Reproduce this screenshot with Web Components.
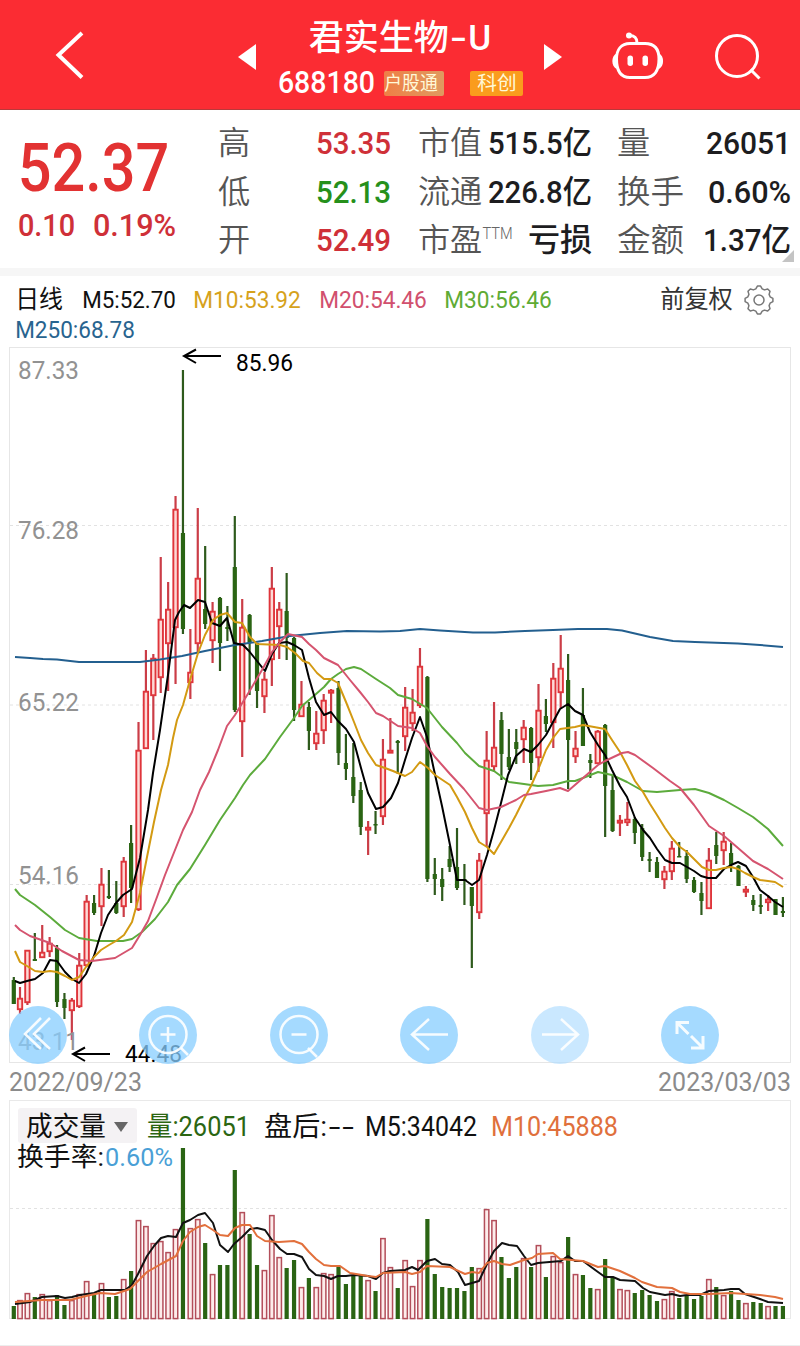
<!DOCTYPE html>
<html lang="zh-CN">
<head>
<meta charset="utf-8">
<title>君实生物-U 688180</title>
<style>
  body {
    margin: 0;
    width: 800px;
    height: 1346px;
    overflow: hidden;
    background: #fff;
    font-family: Roboto, "Noto Sans CJK SC", sans-serif;
  }
</style>
</head>
<body>
<stock-page></stock-page>

<script>
// Text squeezed to a fixed width, the figures use a condensed look
class FitText extends HTMLElement {
  constructor() {
    super();
    this.attachShadow({ mode: 'open' });
    this.shadowRoot.innerHTML = `
      <style>
        :host { display: block; flex: none; height: 1em; line-height: 1em; white-space: nowrap; }
        span { display: inline-block; transform-origin: 0 50%; vertical-align: top; height: 1em; }
      </style>
      <span><slot></slot></span>`;
  }

  connectedCallback() {
    const w = Number(this.getAttribute('w'));
    const size = Number(this.getAttribute('size'));
    const span = this.shadowRoot.querySelector('span');
    this.style.fontSize = `${size}px`;
    this.style.width = `${w}px`;
    const bearing = size * 0.035;
    const scale = (w + bearing * 2) / span.getBoundingClientRect().width;
    span.style.transform = `translateX(${-bearing}px) scaleX(${scale})`;
  }
}
customElements.define('fit-text', FitText);

class StockHeader extends HTMLElement {
  constructor() {
    super();
    this.attachShadow({ mode: 'open' });
    this.shadowRoot.innerHTML = `
      <style>
        :host {
          display: grid;
          grid-template-columns: 238px 18px 288px 18px 50px 52px 51px 1fr;
          height: 110px;
          box-sizing: border-box;
          border-bottom: 1px solid #b9393a;
          background: #fb2c33;
          color: #fff;
        }
        svg { display: block; overflow: visible; }
        .middle { padding-top: 21px; }
        .name { margin-left: 54px; font-weight: 500; }
        .dash { display: inline-block; transform: scaleX(1.400); margin: 0 .120em 0 .100em; }
        .line { display: flex; align-items: center; margin: 15px 0 0 23px; height: 25px; font-weight: 500; }
        .tag { height: 25px; box-sizing: border-box; display: flex; align-items: center; border-radius: 2px; color: #fff9d8; font-weight: 400; }
        .connect { width: 60px; margin-left: 10px; padding-left: 1px; background: linear-gradient(90deg, #ef7f46, #df9a60); }
        .star { width: 53px; margin-left: 26px; padding-left: 8px; background: #fa9c1d; }
      </style>
      <svg width="100" height="109" fill="none" stroke="#fff" stroke-width="4"><path d="M82 33L58.500 55L82 77.500"/></svg>
      <svg width="18" height="109" fill="#fff"><path d="M0 57L18 44V70Z"/></svg>
      <div class="middle">
        <fit-text class="name" w="180" size="35">君实生物<span class="dash">-</span>U</fit-text>
        <div class="line">
          <fit-text w="95" size="30.5">688180</fit-text>
          <div class="tag connect"><fit-text w="52" size="19">户股通</fit-text></div>
          <div class="tag star"><fit-text w="38" size="19">科创</fit-text></div>
        </div>
      </div>
      <svg width="18" height="109" fill="#fff"><path d="M0 44V70L18 57Z"/></svg>
      <i></i>
      <svg width="52" height="109" viewBox="612 0 52 109" fill="none" stroke="#fff" stroke-width="3">
        <path d="M630 43.500H645C655 43.500 659 50 659 59C659 71 654 77.500 645 77.500H630C621 77.500 616.500 71 616.500 59C616.500 50 621 43.500 630 43.500Z"/>
        <path d="M637 43C637 38 635 35.500 629 35.500"/>
        <circle cx="629" cy="35.500" r="3" fill="#fff" stroke="none"/>
        <path d="M616.500 53.500C611 56 611 66 616.500 69ZM659 53.500C664.500 56 664.500 66 659 69Z" fill="#fff" stroke="none"/>
        <rect x="627.500" y="55.500" width="5.500" height="10.500" rx="2.700" fill="#fff" stroke="none"/>
        <rect x="642.500" y="55.500" width="5.500" height="10.500" rx="2.700" fill="#fff" stroke="none"/>
      </svg>
      <i></i>
      <svg width="46" height="109" viewBox="715 0 46 109" fill="none" stroke="#fff" stroke-width="3">
        <circle cx="737" cy="56" r="20.500"/><path d="M750.500 69.500L759.500 78.500"/>
      </svg>`;
  }
}
customElements.define('stock-header', StockHeader);

class QuotePanel extends HTMLElement {
  constructor() {
    super();
    this.attachShadow({ mode: 'open' });
    this.shadowRoot.innerHTML = `
      <style>
        :host {
          display: grid;
          grid-template-columns: 219px 171px 29px 172px 27px 172px;
          height: 166px;
          box-sizing: border-box;
          border-bottom: 8px solid #f6f6f6;
          position: relative;
          color: #1d1d1f;
        }
        .price { color: #e23232; font-weight: 500; padding: 26px 0 0 20px; }
        .change { display: flex; gap: 20px; margin: 7px 0 0 -1px; color: #cf3038; font-weight: 500; }
        .list { display: grid; grid-auto-rows: 48.700px; padding-top: 8.500px; align-content: start; font-weight: 500; }
        .row { display: flex; align-items: center; justify-content: space-between; }
        .label { color: #555; font-weight: 350; }
        .key { display: flex; align-items: center; gap: 2px; }
        .ttm { color: #666; font-weight: 300; margin-top: -13px; }
        .up { color: #cf3038; }
        .down { color: #26901b; }
        .corner { position: absolute; right: 6px; bottom: 6px; border: 6.500px solid; border-color: transparent #c4c4c4 #c4c4c4 transparent; }
      </style>
      <div class="price">
        <fit-text w="147" size="66">52.37</fit-text>
        <div class="change"><fit-text w="55" size="32">0.10</fit-text><fit-text w="81" size="32">0.19%</fit-text></div>
      </div>
      <div class="list">
        <div class="row"><fit-text class="label" w="30" size="32">高</fit-text><fit-text class="up" w="73" size="32">53.35</fit-text></div>
        <div class="row"><fit-text class="label" w="30" size="32">低</fit-text><fit-text class="down" w="73" size="32">52.13</fit-text></div>
        <div class="row"><fit-text class="label" w="30" size="32">开</fit-text><fit-text class="up" w="73" size="32">52.49</fit-text></div>
      </div>
      <i></i>
      <div class="list">
        <div class="row"><fit-text class="label" w="62" size="32">市值</fit-text><fit-text w="102" size="32">515.5亿</fit-text></div>
        <div class="row"><fit-text class="label" w="62" size="32">流通</fit-text><fit-text w="102" size="32">226.8亿</fit-text></div>
        <div class="row">
          <div class="key"><fit-text class="label" w="62" size="32">市盈</fit-text><fit-text class="ttm" w="29" size="17">TTM</fit-text></div>
          <fit-text w="62" size="32">亏损</fit-text>
        </div>
      </div>
      <i></i>
      <div class="list">
        <div class="row"><fit-text class="label" w="31" size="32">量</fit-text><fit-text w="83" size="32">26051</fit-text></div>
        <div class="row"><fit-text class="label" w="65" size="32">换手</fit-text><fit-text w="81" size="32">0.60%</fit-text></div>
        <div class="row"><fit-text class="label" w="65" size="32">金额</fit-text><fit-text w="86" size="32">1.37亿</fit-text></div>
      </div>
      <div class="corner"></div>`;
  }
}
customElements.define('quote-panel', QuotePanel);

class AverageLegend extends HTMLElement {
  constructor() {
    super();
    this.attachShadow({ mode: 'open' });
    // eight rounded teeth round a ring
    let gear = '';
    for (let i = 0; i < 16; i += 1) {
      const r = [14, 14, 11.5, 11.5];
      for (let j = 0; j < 2; j += 1) {
        const a = (i * 22.5 + (j ? 6.5 : -6.5)) * Math.PI / 180;
        const rad = r[(i % 2) * 2];
        gear += `${(15 + rad * Math.sin(a)).toFixed(1)},${(15 - rad * Math.cos(a)).toFixed(1)} `;
      }
    }
    this.shadowRoot.innerHTML = `
      <style>
        :host { display: block; height: 71px; box-sizing: border-box; padding: 9px 26px 0 16px; font-weight: 400; color: #111; }
        .row { display: flex; align-items: center; height: 30px; gap: 19.500px; }
        .first { margin-right: 1px; }
        .m10 { color: #d6a21c; }
        .m20 { color: #d1506e; }
        .m30 { color: #5fab35; }
        .m250 { color: #28648f; }
        .right { margin-left: auto; display: flex; gap: 12px; align-items: center; color: #333; }
        svg { display: block; }
      </style>
      <div class="row">
        <fit-text class="first" w="46" size="24.500">日线</fit-text>
        <fit-text w="92" size="24.500">M5:52.70</fit-text>
        <fit-text class="m10" w="106" size="24.500">M10:53.92</fit-text>
        <fit-text class="m20" w="106" size="24.500">M20:54.46</fit-text>
        <fit-text class="m30" w="106" size="24.500">M30:56.46</fit-text>
        <div class="right">
          <fit-text w="71" size="24.500">前复权</fit-text>
          <svg width="30" height="30" fill="none" stroke="#777" stroke-width="1.500" stroke-linejoin="round"><polygon points="${gear}"/><circle cx="15" cy="15" r="5"/></svg>
        </div>
      </div>
      <div class="row"><fit-text class="m250" w="118" size="24.500">M250:68.78</fit-text></div>`;
  }
}
customElements.define('average-legend', AverageLegend);

// direction, high, body top, body bottom, low, volume top
const bars = `
g 977 980 1004 1004 1306|r 987 998 1010 1014 1300|r 950 950 1003 1005 1293|g 933 959 961 961 1297|r 925 952 958 958 1294
r 937 943 952 957 1300|g 945 948 1002 1007 1295|g 993 999 1008 1019 1305|r 998 1000 1011 1040 1300|r 953 965 1007 1008 1294
r 895 901 966 967 1281|g 895 903 913 915 1295|r 868 884 907 926 1283|g 870 896 898 899 1297|g 881 903 913 914 1296
r 857 861 907 917 1279|g 825 843 888 903 1271|r 722 750 910 911 1220|r 650 691 749 749 1226|r 654 658 696 740 1243
r 557 619 678 693 1241|r 582 609 644 691 1252|r 496 509 628 684 1229|g 370 533 629 634 1148|r 629 672 683 699 1228
r 508 578 644 652 1219|g 546 609 624 629 1243|r 602 611 641 663 1274|g 597 598 643 671 1265|g 606 627 629 641 1265
g 516 567 710 712 1170|r 599 627 722 757 1212|g 614 615 643 695 1234|g 643 643 691 708 1265|r 672 679 697 713 1270
r 567 588 660 686 1215|r 602 609 627 659 1257|g 573 611 638 660 1268|g 637 638 710 721 1260|r 681 704 717 717 1287
g 702 707 731 750 1278|r 711 733 744 750 1287|r 694 700 731 744 1273|r 689 690 692 723 1274|g 681 688 753 765 1267
g 734 763 769 780 1284|g 743 777 796 803 1276|g 782 790 827 835 1276|r 821 827 830 855 1280|g 811 824 825 834 1291
r 739 759 817 825 1238|r 718 750 752 753 1267|g 740 741 743 774 1288|r 687 707 737 751 1260|r 689 712 724 731 1286
r 648 666 706 708 1260|g 676 677 879 882 1219|g 858 874 879 895 1274|g 868 879 887 901 1287|g 846 859 867 872 1288
g 828 867 888 890 1288|g 864 879 881 905 1291|g 887 887 906 968 1267|r 853 860 913 919 1268|r 731 760 814 847 1209
r 702 747 767 772 1220|g 712 720 754 780 1257|g 729 757 767 770 1278|g 729 742 749 764 1267|r 720 727 740 763 1258
g 727 728 763 780 1267|r 684 710 758 772 1245|g 699 716 724 732 1277|r 663 678 723 748 1256|r 635 668 693 708 1262
g 654 680 740 789 1237|r 731 748 757 763 1274|g 688 715 746 746 1275|g 754 760 763 778 1288|r 730 731 764 764 1289
g 724 725 786 837 1259|g 775 790 831 832 1277|r 815 820 823 836 1289|r 802 819 823 826 1290|g 817 819 833 844 1293
g 824 828 857 861 1290|g 852 859 861 872 1295|g 857 862 878 878 1301|r 866 871 880 889 1299|r 841 848 872 880 1291
g 842 856 857 857 1298|g 850 856 879 883 1295|g 877 880 892 893 1299|g 882 893 901 915 1296|r 848 860 909 909 1279
g 832 845 856 864 1287|r 832 841 851 865 1295|g 843 853 865 872 1291|g 865 866 886 886 1300|r 886 889 892 897 1303
g 895 900 905 911 1302|g 894 905 907 914 1303|r 895 899 903 911 1306|g 899 899 915 915 1306|g 897 911 913 917 1306`
  .trim().split(/[|\n]/).map((row, i) => {
    const [dir, ...n] = row.split(' ');
    // the oldest bar is cut by the left edge and sits a little closer
    return { up: dir === 'r', x: i ? 20 + (i - 1) * 7.407 : 13.8, n: n.map(Number) };
  });

const averages = {
  '#235f8f': '15,657 30,658 43,659 57,659.500 79,662 140,662 160,659.500 182,656 205,651 235,645 262,641 290,636 320,633 347,631 380,631.500 400,631 420,629 440,630.500 473,632.500 495,632.500 525,631 553,630 578,629 607,629 622,630.500 650,637 673,641 695,642 738,643.500 760,645 783,647',
  '#5cab3c': '15,889 20,895 35,905 50,917 65,930 79,938 97,941 123,941 132,939 142,932 155,919 168,902 177,885 190,869 205,845 220,820 235,798 243,785 250,775 265,759 280,737 294,718 302,706 316,694 324,687 331,679 338,674 346,669 354,667 361,669 376,679 390,688 398,695 412,699 427,708 442,727 457,743 465,753 479,766 494,771 509,782 524,784 538,786 553,785 568,781 575,781 583,778 598,772 612,775 627,782 643,791 657,792 680,790 695,789 709,793 724,800 738,808 753,817 768,829 783,846',
  '#000': '15,981 20,983 27,981 35,979 43,973 50,960 57,961 65,972 72,979 79,983 86,974 94,956 101,933 108,915 116,903 123,895 132,889 140,858 148,810 153,773 160,730 168,675 175,620 179,612 184,605 190,608 198,600 205,602 212,623 220,626 227,618 234,643 243,645 249,651 257,661 265,671 272,654 279,643 287,642 294,645 302,650 309,678 316,702 324,715 331,712 338,721 346,729 354,742 361,768 368,793 376,809 383,807 391,798 398,783 405,760 412,738 420,717 427,737 434,770 442,806 450,845 457,880 465,880 472,885 479,880 487,855 494,830 501,803 508,775 516,756 524,749 531,752 538,745 546,735 553,722 560,709 568,704 575,711 583,715 590,732 598,745 605,755 612,770 620,786 627,797 635,818 643,830 650,838 657,849 665,860 672,863 680,863 687,867 694,871 701,876 708,878 716,878 724,869 731,865 738,862 746,866 753,877 760,890 768,896 775,902 783,907',
  '#d39a12': '15,951 20,962 27,966 35,971 43,972 50,971 57,972 65,976 72,980 79,977 86,967 94,957 101,950 109,945 116,941 124,935 132,922 140,893 147,857 154,822 161,790 168,765 173,738 177,720 183,705 190,680 198,653 205,635 213,620 220,615 227,613 235,622 242,623 250,637 257,644 280,645 287,647 295,653 303,661 309,663 317,673 324,679 331,679 338,683 346,702 354,722 361,740 368,753 376,765 385,768 393,771 405,776 412,772 420,762 428,768 435,775 450,785 457,797 465,812 472,828 479,842 487,847 494,854 501,842 509,828 516,815 524,799 531,786 538,770 546,750 553,738 560,729 575,727 583,725 605,729 612,740 620,752 627,765 635,781 643,792 650,804 657,815 665,828 672,838 680,847 687,852 694,859 702,867 709,870 716,870 724,868 731,867 738,869 745,873 753,877 760,880 768,881 775,882 783,887',
  '#d5546f': '15,925 20,930 30,936 50,943 62,951 79,960 92,961 115,958 132,948 140,935 148,921 157,897 165,875 173,855 183,830 192,812 200,790 209,772 218,750 227,726 235,715 249,692 262,670 272,652 280,642 288,634 302,637 309,644 316,650 324,658 338,665 350,680 360,692 368,702 376,713 383,716 398,726 412,728 420,733 427,746 435,757 450,774 464,789 479,808 487,810 501,807 516,800 524,795 531,794 546,791 560,788 568,791 583,778 598,765 605,761 622,753 628,752 635,755 653,768 670,781 680,788 694,805 709,826 724,836 738,848 753,861 768,869 783,879',
};

const volumeAverages = {
  '#111': '15,1304 30,1302 42,1297 57,1296 65,1298 72,1297 80,1295 94,1293 101,1290 125,1290 132,1285 138,1274 147,1256 154,1246 161,1238 168,1236 176,1237 183,1223 190,1220 198,1215 205,1213 213,1223 220,1245 228,1252 234,1244 242,1237 250,1229 257,1228 265,1230 272,1240 280,1249 287,1254 294,1254 302,1257 309,1269 316,1275 324,1276 331,1279 338,1276 346,1276 354,1275 368,1276 376,1279 383,1273 390,1271 405,1270 412,1267 418,1270 427,1261 435,1259 442,1264 450,1265 458,1272 465,1285 479,1281 487,1264 494,1251 502,1243 509,1245 517,1246 524,1256 531,1265 538,1263 561,1261 568,1256 575,1261 583,1261 598,1272 605,1277 613,1277 620,1280 635,1281 643,1288 650,1292 665,1295 672,1294 680,1296 687,1295 700,1295 709,1291 724,1290 731,1289 739,1289 745,1294 760,1299 768,1302 783,1303',
  '#e2703c': '15,1302 42,1300 70,1300 86,1296 100,1293 115,1294 130,1289 138,1281 147,1272 161,1264 176,1256 183,1241 190,1232 198,1227 205,1225 213,1230 220,1235 228,1236 235,1228 242,1225 250,1225 257,1236 265,1241 279,1242 294,1241 302,1244 309,1252 316,1259 324,1265 331,1266 340,1266 350,1273 368,1276 376,1277 383,1273 405,1272 412,1274 420,1272 427,1266 450,1267 465,1274 472,1272 479,1273 487,1263 494,1261 502,1264 510,1265 524,1260 532,1258 538,1254 553,1253 560,1259 583,1261 598,1267 605,1266 620,1271 635,1278 642,1282 657,1287 672,1288 680,1292 690,1294 709,1294 731,1293 760,1295 775,1297 783,1299',
};

const lines = (set) => Object.keys(set)
  .map((color) => `<polyline points="${set[color]}" fill="none" stroke="${color}" stroke-width="2" stroke-linejoin="round"/>`)
  .join('');

class ToolButton extends HTMLElement {
  constructor() {
    super();
    this.attachShadow({ mode: 'open' });
  }

  connectedCallback() {
    const icons = {
      first: '<path d="M32 12L16 28L32 43M41 12L25 28L41 43"/>',
      plus: '<circle cx="29" cy="28.500" r="18.500"/><path d="M42 42L49 49M21.500 28.500H36.500M29 21V36"/>',
      minus: '<circle cx="29" cy="28.500" r="18.500"/><path d="M38 42L47 51M21.500 28.500H36.500"/>',
      left: '<path d="M48 28.500H12M29 13L12 28.500L29 44"/>',
      right: '<path d="M11 28.500H47M30 13L47 28.500L30 44"/>',
      expand: '<path stroke-width="3" d="M16 28V16.500H28M16 16.500L27.500 28M30 30L42 42M42 30V42H30"/>',
    };
    this.shadowRoot.innerHTML = `
      <style>
        :host { display: block; width: 58px; height: 58px; border-radius: 50%; background: rgba(135, 205, 255, .75); }
        :host([disabled]) { background: rgba(170, 218, 255, .62); }
        svg { display: block; }
      </style>
      <svg width="58" height="58" fill="none" stroke="#fff" stroke-opacity=".9" stroke-width="2.500">${icons[this.getAttribute('icon')]}</svg>`;
  }
}
customElements.define('tool-button', ToolButton);

class PriceChart extends HTMLElement {
  constructor() {
    super();
    this.attachShadow({ mode: 'open' });
    const grid = [525.5, 705, 884.5].map((y) => `<path d="M10 ${y}H790" stroke="#e2e2e2" stroke-dasharray="3 3"/>`).join('');
    const scale = [['87.33', 378.5], ['76.28', 538.5], ['65.22', 711], ['54.16', 883.5], ['43.11', 1050]]
      .map(([t, y]) => `<text x="18" y="${y}" font-size="26.500" fill="#929292" textLength="61" lengthAdjust="spacingAndGlyphs">${t}</text>`)
      .join('');
    const candles = bars.map(({ up, x, n: [high, top, bottom, low] }) => {
      if (up) {
        const h = Math.max(bottom - top - 1.5, 2);
        return `<path d="M${x} ${high}V${low}" stroke="#cb3d47" stroke-width="2.200"/>
          <rect x="${x - 2.2}" y="${top + 0.7}" width="4.400" height="${h}" fill="#fdd9d6" stroke="#df353b" stroke-width="1.900"/>`;
      }
      return `<path d="M${x} ${high}V${low}" stroke="#2e5a1c" stroke-width="2.200"/>
        <rect x="${x - 2.1}" y="${top}" width="4.200" height="${Math.max(bottom - top, 1.5)}" fill="#2a6413"/>`;
    }).join('');
    this.shadowRoot.innerHTML = `
      <style>
        :host { display: block; position: relative; height: 717px; }
        svg { display: block; overflow: visible; }
        .tools { position: absolute; left: 9px; right: 81px; bottom: 0; display: flex; justify-content: space-between; }
      </style>
      <svg width="800" height="717" viewBox="0 347 800 717">
        <rect x="9.500" y="347.500" width="781" height="715" fill="none" stroke="#e6e6e6"/>
        ${grid}${candles}${lines(averages)}${scale}
        <g fill="none" stroke="#000" stroke-width="2">
          <path d="M221 356H184M196 349.500L184 356L196 363"/>
          <path d="M110 1054H73M85 1047.500L73 1054L85 1061"/>
        </g>
        <text x="236" y="371" font-size="24" textLength="57" lengthAdjust="spacingAndGlyphs">85.96</text>
        <text x="125" y="1061.500" font-size="24" textLength="57" lengthAdjust="spacingAndGlyphs">44.48</text>
      </svg>
      <div class="tools">
        <tool-button icon="first"></tool-button>
        <tool-button icon="plus"></tool-button>
        <tool-button icon="minus"></tool-button>
        <tool-button icon="left"></tool-button>
        <tool-button icon="right" disabled></tool-button>
        <tool-button icon="expand"></tool-button>
      </div>`;
  }
}
customElements.define('price-chart', PriceChart);

class VolumeChart extends HTMLElement {
  constructor() {
    super();
    this.attachShadow({ mode: 'open' });
    const columns = bars.map(({ up, x, n }) => {
      const top = n[4];
      return up
        ? `<rect x="${x - 2.2}" y="${top + 0.6}" width="4.400" height="${1318 - top}" fill="#fdeceb" stroke="#b34e5a" stroke-width="1.500"/>`
        : `<rect x="${x - 2.1}" y="${top}" width="4.200" height="${1319 - top}" fill="#2a6413"/>`;
    }).join('');
    this.shadowRoot.innerHTML = `
      <style>
        :host { display: block; position: relative; height: 246px; box-sizing: border-box; padding: 8px 0 0 18px; border-bottom: 1px solid #ededed; color: #111; }
        svg.plot { position: absolute; left: 0; top: 0; }
        .legend { position: relative; }
        .row { display: flex; align-items: center; }
        .select { display: flex; align-items: center; gap: 9px; width: 119px; height: 35px; box-sizing: border-box; padding: 3px 0 0 9px; background: #f4f2f4; border-radius: 3px; margin-right: 11px; }
        .top { height: 35px; }
        .item { margin: 3px 16px 0 0; }
        .vol { color: #2b6612; }
        .dash { display: inline-block; transform: scaleX(1.500); margin: 0 .110em; }
        .m5 { margin-left: -4px; }
        .m10 { color: #e0703c; }
        .turnover { gap: 3px; height: 28px; }
        .rate { color: #4a9fd6; }
      </style>
      <svg class="plot" width="800" height="220" viewBox="0 1100 800 220">
        <rect x="9.500" y="1100.500" width="781" height="218" fill="none" stroke="#e9e9e9"/>
        <path d="M10 1208.500H790" stroke="#e2e2e2" stroke-dasharray="3 3"/>
        ${columns}${lines(volumeAverages)}
      </svg>
      <div class="legend">
        <div class="row top">
          <div class="select"><fit-text w="78" size="27">成交量</fit-text><svg width="14" height="11"><path d="M0 0H14L7 10Z" fill="#666"/></svg></div>
          <fit-text class="item vol" w="101" size="27">量:26051</fit-text>
          <fit-text class="item" w="89" size="27">盘后:<span class="dash">-</span><span class="dash">-</span></fit-text>
          <fit-text class="item m5" w="110" size="27">M5:34042</fit-text>
          <fit-text class="item m10" w="125" size="27">M10:45888</fit-text>
        </div>
        <div class="row turnover"><fit-text w="85" size="26.500">换手率:</fit-text><fit-text class="rate" w="66" size="26.500">0.60%</fit-text></div>
      </div>`;
  }
}
customElements.define('volume-chart', VolumeChart);

class StockPage extends HTMLElement {
  constructor() {
    super();
    this.attachShadow({ mode: 'open' });
    this.shadowRoot.innerHTML = `
      <style>
        :host { display: flex; flex-direction: column; width: 800px; height: 1346px; }
        .dates { display: flex; align-items: center; justify-content: space-between; height: 36px; padding: 0 10px; color: #8b8b8b; }
      </style>
      <stock-header></stock-header>
      <quote-panel></quote-panel>
      <average-legend></average-legend>
      <price-chart></price-chart>
      <div class="dates"><fit-text w="131" size="26">2022/09/23</fit-text><fit-text w="131" size="26">2023/03/03</fit-text></div>
      <volume-chart></volume-chart>`;
  }
}
customElements.define('stock-page', StockPage);
</script>
</body>
</html>
